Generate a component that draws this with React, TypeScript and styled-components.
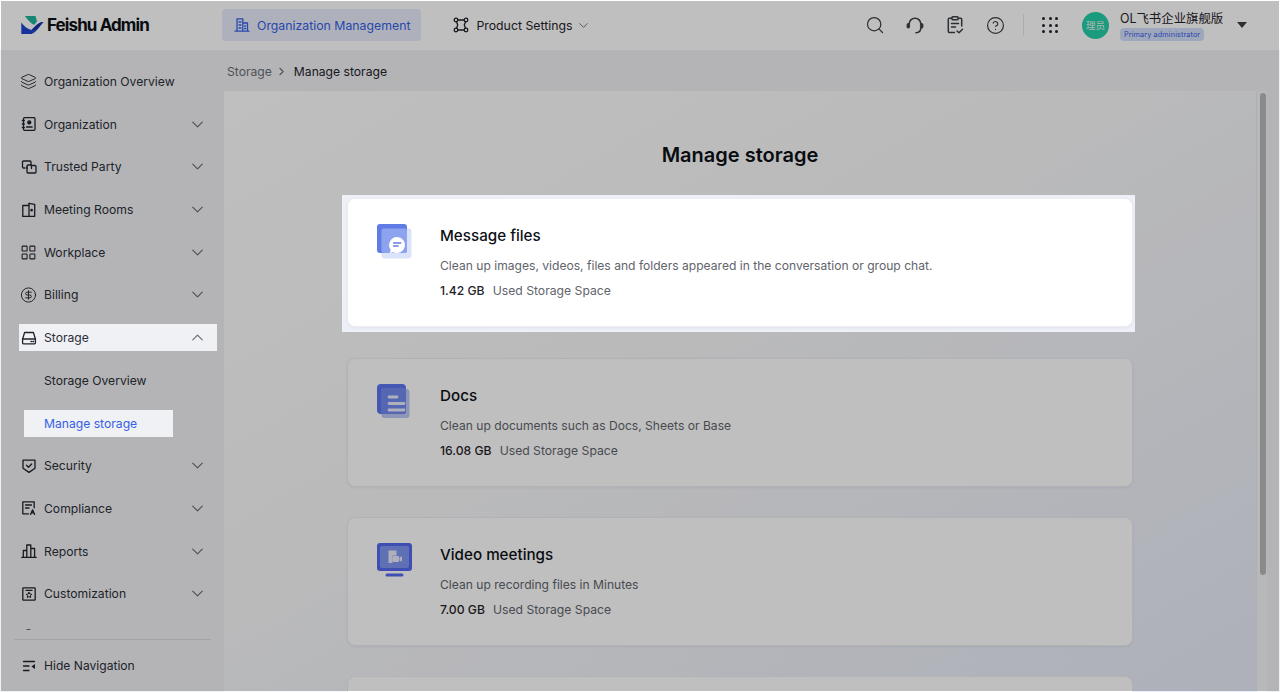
import { ReactNode } from "react";
import styled, { createGlobalStyle } from "styled-components";
import {
  ChevronDown,
  ChevronRight,
  ChevronUp,
  CircleDollarSign,
  CircleHelp,
  Layers,
  LayoutGrid,
  Search,
} from "lucide-react";

const GlobalStyle = createGlobalStyle`
  html, body {
    margin: 0;
    padding: 0;
    height: 100%;
    overflow: hidden;
  }
  body {
    font-family: Inter, "Noto Sans CJK SC", "Liberation Sans", sans-serif;
    color: #1f2329;
    background: #f0f1f5;
  }
`;

// dim layer of the product tour, the spotlit parts sit above it
const Dim = styled.div`
  position: fixed;
  inset: 1px;
  background: rgba(0, 0, 0, 0.25);
  z-index: 10;
`;

const Page = styled.div`
  width: 1280px;
  height: 692px;
  display: flex;
  flex-direction: column;
  overflow: hidden;
`;

const TopBar = styled.header`
  height: 50px;
  flex: none;
  display: flex;
  align-items: center;
  background: #ffffff;
  padding: 0 33px 0 21px;
`;

const Logo = styled.div`
  width: 201px;
  display: flex;
  align-items: center;
  gap: 3px;
  font-size: 17px;
  font-weight: 700;
  letter-spacing: -0.9px;
  color: #0d1117;
`;

const TopTab = styled.div<{ $active?: boolean }>`
  height: 32px;
  display: flex;
  align-items: center;
  gap: 7px;
  padding: 0 11px 0 12px;
  border-radius: 4px;
  font-size: 12.3px;
  color: ${(p) => (p.$active ? "#3660e6" : "#1f2329")};
  background: ${(p) => (p.$active ? "#e8edfb" : "transparent")};
  margin-right: ${(p) => (p.$active ? "20px" : "0")};
`;

const TabChevron = styled(ChevronDown)`
  margin-left: -3px;
  color: #6a6e75;
`;

const TopRight = styled.div`
  margin-left: auto;
  display: flex;
  align-items: center;
`;

const ToolIcon = styled.div`
  width: 20px;
  height: 20px;
  margin-right: 20px;
  display: flex;
  align-items: center;
  justify-content: center;
  color: #3b3f45;
`;

const Divider = styled.div`
  width: 1px;
  height: 22px;
  background: #e4e6ea;
  margin: 0 18px 0 -2px;
`;

const Dots = styled.div`
  display: grid;
  grid-template-columns: repeat(3, 3px);
  gap: 3.5px 3.5px;
  margin-right: 24px;
  & > i {
    width: 3px;
    height: 3px;
    border-radius: 50%;
    background: #1f2329;
  }
`;

const Avatar = styled.div`
  width: 27px;
  height: 27px;
  border-radius: 50%;
  background: #24cfa8;
  color: #e8f5f0;
  font-size: 9.5px;
  display: flex;
  align-items: center;
  justify-content: center;
  margin-right: 11px;
`;

const Tenant = styled.div`
  display: flex;
  flex-direction: column;
  align-items: flex-start;
  gap: 1px;
  width: 117px;
`;

const TenantName = styled.div`
  font-size: 12.4px;
  line-height: 17px;
  color: #1f2329;
`;

const RoleTag = styled.div`
  font-size: 7.3px;
  line-height: 13px;
  padding: 0 4px;
  border-radius: 4px;
  color: #3660e6;
  background: #d5dffb;
  letter-spacing: 0.1px;
`;

const Caret = styled.div`
  width: 0;
  height: 0;
  border-left: 5px solid transparent;
  border-right: 5px solid transparent;
  border-top: 6px solid #3b3f45;
`;

const Body = styled.div`
  flex: 1;
  min-height: 0;
  display: flex;
`;

const Side = styled.aside`
  width: 224px;
  flex: none;
  display: flex;
  flex-direction: column;
  padding: 18px 0 0 14px;
  box-sizing: border-box;
`;

const NavList = styled.nav`
  flex: 1;
  min-height: 0;
  margin-bottom: 9px;
  overflow: hidden;
  display: flex;
  flex-direction: column;
  gap: 15.7px;
`;

const NavRow = styled.div<{ $spot?: boolean }>`
  height: 27px;
  flex: none;
  width: 198px;
  margin-left: 5px;
  display: flex;
  align-items: center;
  padding: 0 10px 0 1px;
  box-sizing: border-box;
  font-size: 12.15px;
  color: #2b2f36;
  background: ${(p) => (p.$spot ? "#f0f1f5" : "transparent")};
  position: ${(p) => (p.$spot ? "relative" : "static")};
  z-index: ${(p) => (p.$spot ? 11 : "auto")};
`;

const NavIcon = styled.span`
  width: 17px;
  height: 17px;
  margin-right: 7px;
  flex: none;
  display: flex;
  align-items: center;
  justify-content: center;
  color: #1f2329;
`;

const NavLabel = styled.span`
  flex: 1;
`;

const SubRow = styled.div<{ $spot?: boolean }>`
  height: 27px;
  flex: none;
  width: 149px;
  margin-left: 10px;
  padding-left: 20px;
  box-sizing: border-box;
  display: flex;
  align-items: center;
  font-size: 12.15px;
  color: ${(p) => (p.$spot ? "#3660e6" : "#2b2f36")};
  background: ${(p) => (p.$spot ? "#f0f1f5" : "transparent")};
  position: ${(p) => (p.$spot ? "relative" : "static")};
  z-index: ${(p) => (p.$spot ? 11 : "auto")};
`;

const SideFoot = styled.div`
  flex: none;
  height: 53px;
  width: 197px;
  border-top: 1px solid #d9dbe0;
  display: flex;
  align-items: center;
  padding: 0 0 1px 6px;
  box-sizing: border-box;
  font-size: 12.1px;
  color: #2b2f36;
`;

const Main = styled.main`
  flex: 1;
  min-width: 0;
  display: flex;
  flex-direction: column;
`;

const Crumbs = styled.div`
  height: 41px;
  flex: none;
  display: flex;
  align-items: center;
  padding: 1px 0 0 3px;
  box-sizing: border-box;
  font-size: 12.15px;
  color: #6a6e75;
  gap: 3px;
  & b {
    font-weight: 400;
    color: #1f2329;
    margin-left: 3px;
  }
`;

const Panel = styled.div`
  flex: 1;
  min-height: 0;
  overflow: hidden;
  display: flex;
  flex-direction: column;
  align-items: center;
  width: 1032px;
  background: linear-gradient(150deg, #ffffff 0%, #f9f9fa 40%, #e8ecf8 100%);
  padding-top: 50px;
  box-sizing: border-box;
`;

const PageTitle = styled.h1`
  margin: 0 0 26px;
  font-size: 20px;
  line-height: 28px;
  font-weight: 600;
  color: #0d1117;
  text-align: center;
`;

const SpotWrap = styled.div`
  position: relative;
  z-index: 11;
  padding: 3px 2px 5px 5px;
  width: 793px;
  box-sizing: border-box;
  flex: none;
  margin: 0 0 -4px -3px;
  background: #edf0f6;
`;

const CardSlot = styled.div`
  width: 786px;
  flex: none;
  margin-top: 30px;
`;

const CardBox = styled.div`
  height: 129px;
  border: 1px solid #eceef2;
  border-radius: 8px;
  background: #ffffff;
  display: flex;
  box-sizing: border-box;
  padding: 25px 0 0 29px;
  box-shadow: 0 1px 3px rgba(30, 40, 70, 0.06);
`;

const CardIcon = styled.div`
  width: 37px;
  height: 37px;
  flex: none;
  margin-right: 26px;
`;

const CardText = styled.div`
  display: flex;
  flex-direction: column;
  padding-top: 1px;
`;

const CardTitle = styled.div`
  font-size: 15.2px;
  line-height: 22px;
  font-weight: 500;
  color: #0d1117;
  margin-bottom: 10px;
`;

const CardDesc = styled.div`
  font-size: 12.1px;
  line-height: 18px;
  color: #5f646b;
  margin-bottom: 7px;
`;

const CardUsage = styled.div`
  font-size: 12.2px;
  line-height: 18px;
  color: #5f646b;
  & b {
    font-weight: 500;
    color: #1f2329;
    margin-right: 8px;
  }
`;

const PartCard = styled.div`
  width: 786px;
  height: 40px;
  flex: none;
  margin-top: 30px;
  background: #fff;
  border: 1px solid #eceef2;
  border-radius: 8px;
  box-sizing: border-box;
`;

const ScrollTrack = styled.div`
  width: 11px;
  flex: none;
  margin: 41px 13px 0 0;
  background: #f5f6f8;
  border-left: 1px solid #ebebec;
  box-sizing: border-box;
`;

const ScrollThumb = styled.div`
  width: 6px;
  height: 482px;
  margin: 2px 0 0 3px;
  border-radius: 3px;
  background: #b8b9b9;
`;

const base = { fill: "none", stroke: "currentColor", strokeWidth: 1.3, strokeLinecap: "round", strokeLinejoin: "round" } as const;

const IconContact = () => (
  <svg width="16" height="16" viewBox="0 0 16 16" {...base}>
    <rect x="2.5" y="1.7" width="11.5" height="12.6" rx="1" />
    <path d="M1.3 4.5h2M1.3 8h2M1.3 11.5h2" />
    <circle cx="8.3" cy="6.4" r="1.5" fill="currentColor" />
    <path d="M5.6 11h5.4" strokeWidth="1.6" />
  </svg>
);
const IconTrusted = () => (
  <svg width="16" height="16" viewBox="0 0 16 16" {...base}>
    <path d="M10 6V3a1 1 0 0 0-1-1H2.500a1 1 0 0 0-1 1v5a1 1 0 0 0 1 1H4" />
    <path d="M6 8v5a1 1 0 0 0 1 1h7a1 1 0 0 0 1-1V7.500a1 1 0 0 0-1-1h-2.500" />
    <path d="M6 9.500V7a1 1 0 0 1 1-1h3.500v3.500" />
  </svg>
);
const IconRoom = () => (
  <svg width="16" height="16" viewBox="0 0 16 16" {...base}>
    <path d="M1.800 14.300V3.500h6" />
    <path d="M8 1.300l5.700 1v12H1.800" />
    <path d="M8 1.300v13" />
    <circle cx="10.600" cy="8.200" r=".7" fill="currentColor" />
  </svg>
);
const IconDrive = () => (
  <svg width="16" height="16" viewBox="0 0 16 16" {...base}>
    <path d="M3.600 2.500h8.800l2 6.500v4a.8.800 0 0 1-.8.800H2.400a.8.800 0 0 1-.8-.8V9z" />
    <path d="M1.600 9h12.800" />
    <path d="M10 11.500h.5M12 11.500h.5" strokeWidth="1.500" />
  </svg>
);
const IconShield = () => (
  <svg width="16" height="16" viewBox="0 0 16 16" {...base}>
    <path d="M2 2.200h12v8L8 14.400l-6-4.200z" />
    <path d="M5.500 7.300L7.500 9.300l3.200-3.300" />
  </svg>
);
const IconCompliance = () => (
  <svg width="16" height="16" viewBox="0 0 16 16" {...base}>
    <path d="M7.500 13.800H1.800V1.800h11.400v6" />
    <path d="M4.500 5h6M4.500 8h3.500" />
    <path d="M9.600 14.400l2-4.600 2 4.600M10.400 12.800h2.500" />
  </svg>
);
const IconBars = () => (
  <svg width="16" height="16" viewBox="0 0 16 16" {...base}>
    <path d="M.8 14.400h14.400" />
    <path d="M2.300 14.400V7.500h3.500v6.900M5.800 14.400V2h4v12.400M9.800 14.400V5.500h3.800v8.900" />
  </svg>
);
const IconCustom = () => (
  <svg width="16" height="16" viewBox="0 0 16 16" {...base}>
    <rect x="1.800" y="1.800" width="12.400" height="12.400" rx=".8" />
    <path d="M5 4.400h6" />
    <path d="M8 6.300l.9 1.700 1.900.3-1.400 1.300.3 1.900-1.700-.9-1.700.9.300-1.900-1.400-1.300 1.900-.3z" strokeWidth="1" />
  </svg>
);
const IconHide = () => (
  <svg width="16" height="16" viewBox="0 0 16 16" {...base}>
    <path d="M2.500 3.500h11M2.500 8h5.500M2.500 12.500h5.500" />
    <path d="M14 6v5l-3.600-2.500z" fill="currentColor" stroke="none" />
  </svg>
);
const IconBuilding = () => (
  <svg width="16" height="16" viewBox="0 0 16 16" {...base}>
    <path d="M3 14V1.800h5.800V14M8.800 6H13.500v8M1 14.200h14" />
    <path d="M5 5h2M5 8h2M5 11h2M10.700 9h1M10.700 11.500h1" />
  </svg>
);
const IconNodes = () => (
  <svg width="16" height="16" viewBox="0 0 16 16" {...base}>
    <circle cx="3" cy="3" r="1.800" />
    <circle cx="13" cy="3" r="1.800" />
    <circle cx="3" cy="13" r="1.800" />
    <circle cx="13" cy="13" r="1.800" />
    <path d="M4.800 3h6.400M4.800 13h6.400M3.500 4.800l1.200 3.200-1.200 3.200M12.500 4.800l-1.200 3.200 1.200 3.200" />
  </svg>
);
const IconHeadset = () => (
  <svg width="20" height="20" viewBox="0 0 20 20" {...base} strokeWidth={1.6}>
    <path d="M4.200 9a5.800 5.800 0 0 1 11.600 0" />
    <path d="M15.800 13c0 2.800-1.800 4.600-4.800 4.800" />
    <rect x="2" y="8.500" width="2.600" height="4.600" rx="1.200" fill="currentColor" strokeWidth="0.8" />
    <rect x="15.400" y="8.500" width="2.600" height="4.600" rx="1.200" fill="currentColor" strokeWidth="0.8" />
  </svg>
);
const IconTasks = () => (
  <svg width="20" height="20" viewBox="0 0 20 20" {...base} strokeWidth={1.5}>
    <path d="M9.500 17.500H4.300a1 1 0 0 1-1-1V4.300a1 1 0 0 1 1-1h11.400a1 1 0 0 1 1 1V11" />
    <rect x="7" y="1.800" width="6" height="3" rx=".8" fill="#fff" />
    <path d="M6.500 8.500h7M6.500 12h4" />
    <path d="M12 16l2 1.800 3.500-3.500" />
  </svg>
);
const IconFeishu = () => (
  <svg width="23" height="19" viewBox="0 0 23 19">
    <path d="M.3 6.500c3 4 6.500 6.500 10.200 7.500l5-5C18 7 20 6 22.500 6c-3 3-6.500 10-12 12H.3z" fill="#1f45d0" />
    <path d="M15.500 9C18 7 20 6 22.500 6l-7 7.500-5 .5z" fill="#172f9e" />
    <path d="M4 0h10.500l1.500 5.500-3 3.500C9.500 7 6 3.500 4 0z" fill="#1fb49b" />
  </svg>
);

const IconMessage = () => (
  <svg width="37" height="37" viewBox="0 0 37 37">
    <rect x="4.500" y="4.500" width="30" height="30" rx="3" fill="#dbe3fb" />
    <rect x="0" y="0" width="30" height="29" rx="3" fill="#5f7ce4" />
    <rect x="4.500" y="4.500" width="25.500" height="24.500" rx="2" fill="#8ea3f0" />
    <path d="M20 13a8 8 0 1 1-3.500 15.200L12.800 29l.9-3.300A8 8 0 0 1 20 13z" fill="#fff" />
    <path d="M16.700 19h7M16.700 22h4.300" stroke="#5f7ce4" strokeWidth="1.600" strokeLinecap="round" />
  </svg>
);
const IconDocs = () => (
  <svg width="37" height="37" viewBox="0 0 37 37">
    <rect x="4.500" y="5" width="28" height="29" rx="3" fill="#bcc8f3" />
    <rect x="0" y="0" width="29" height="30" rx="4" fill="#5b74f0" />
    <rect x="4" y="4" width="25" height="26" rx="2" fill="#7288ee" />
    <path d="M12 13h8M12 19.500h15M12 26h15" stroke="#e8ecfc" strokeWidth="2.800" strokeLinecap="round" />
  </svg>
);
const IconVideo = () => (
  <svg width="37" height="37" viewBox="0 0 37 37">
    <rect x="0" y="0" width="35" height="28" rx="3" fill="#5469ee" />
    <rect x="3" y="3" width="29" height="22" rx="2" fill="#8096f0" />
    <rect x="8.500" y="30.500" width="18" height="3" rx="1.500" fill="#5469ee" />
    <path d="M11.500 7.500h8v5h-4V20h-4z" fill="#e9edfb" />
    <rect x="15.500" y="13" width="6.500" height="6" rx="1.200" fill="#e9edfb" />
    <path d="M22.500 14.500l2.500-1.200v5.400l-2.500-1.200z" fill="#e9edfb" />
  </svg>
);

type StorageCard = {
  icon: ReactNode;
  title: string;
  desc: string;
  size: string;
};

const cards: StorageCard[] = [
  { icon: <IconDocs />, title: "Docs", desc: "Clean up documents such as Docs, Sheets or Base", size: "16.08 GB" },
  { icon: <IconVideo />, title: "Video meetings", desc: "Clean up recording files in Minutes", size: "7.00 GB" },
];

function CardBody({ card }: { card: StorageCard }) {
  return (
    <CardBox>
      <CardIcon>{card.icon}</CardIcon>
      <CardText>
        <CardTitle>{card.title}</CardTitle>
        <CardDesc>{card.desc}</CardDesc>
        <CardUsage>
          <b>{card.size}</b>Used Storage Space
        </CardUsage>
      </CardText>
    </CardBox>
  );
}

const messageCard: StorageCard = {
  icon: <IconMessage />,
  title: "Message files",
  desc: "Clean up images, videos, files and folders appeared in the conversation or group chat.",
  size: "1.42 GB",
};

function NavItem({ icon, label, open, spot, leaf }: { icon: ReactNode; label: string; open?: boolean; spot?: boolean; leaf?: boolean }) {
  return (
    <NavRow $spot={spot}>
      <NavIcon>{icon}</NavIcon>
      <NavLabel>{label}</NavLabel>
      {!leaf && (open ? <ChevronUp size={19} strokeWidth={1.5} color="#6a6e75" /> : <ChevronDown size={19} strokeWidth={1.5} color="#6a6e75" />)}
    </NavRow>
  );
}

export default function App() {
  return (
    <Page>
      <GlobalStyle />
      <Dim />
      <TopBar>
        <Logo>
          <IconFeishu />
          Feishu Admin
        </Logo>
        <TopTab $active>
          <IconBuilding />
          Organization Management
        </TopTab>
        <TopTab>
          <IconNodes />
          Product Settings
          <TabChevron size={15} strokeWidth={1.5} />
        </TopTab>
        <TopRight>
          <ToolIcon>
            <Search size={20} strokeWidth={1.5} />
          </ToolIcon>
          <ToolIcon>
            <IconHeadset />
          </ToolIcon>
          <ToolIcon>
            <IconTasks />
          </ToolIcon>
          <ToolIcon>
            <CircleHelp size={19} strokeWidth={1.5} />
          </ToolIcon>
          <Divider />
          <Dots>
            {Array.from({ length: 9 }).map((_, i) => (
              <i key={i} />
            ))}
          </Dots>
          <Avatar>理员</Avatar>
          <Tenant>
            <TenantName>OL飞书企业旗舰版</TenantName>
            <RoleTag>Primary administrator</RoleTag>
          </Tenant>
          <Caret />
        </TopRight>
      </TopBar>
      <Body>
        <Side>
          <NavList>
            <NavItem icon={<Layers size={17} strokeWidth={1.3} />} label="Organization Overview" leaf />
            <NavItem icon={<IconContact />} label="Organization" />
            <NavItem icon={<IconTrusted />} label="Trusted Party" />
            <NavItem icon={<IconRoom />} label="Meeting Rooms" />
            <NavItem icon={<LayoutGrid size={17} strokeWidth={1.5} />} label="Workplace" />
            <NavItem icon={<CircleDollarSign size={18} strokeWidth={1.3} />} label="Billing" />
            <NavItem icon={<IconDrive />} label="Storage" open spot />
            <SubRow>Storage Overview</SubRow>
            <SubRow $spot>Manage storage</SubRow>
            <NavItem icon={<IconShield />} label="Security" />
            <NavItem icon={<IconCompliance />} label="Compliance" />
            <NavItem icon={<IconBars />} label="Reports" />
            <NavItem icon={<IconCustom />} label="Customization" />
            <NavItem icon={<Layers size={17} strokeWidth={1.3} />} label="" leaf />
          </NavList>
          <SideFoot>
            <NavIcon>
              <IconHide />
            </NavIcon>
            Hide Navigation
          </SideFoot>
        </Side>
        <Main>
          <Crumbs>
            Storage
            <ChevronRight size={13} />
            <b>Manage storage</b>
          </Crumbs>
          <Panel>
            <PageTitle>Manage storage</PageTitle>
            <SpotWrap>
              <CardBody card={messageCard} />
            </SpotWrap>
            {cards.map((card) => (
              <CardSlot key={card.title}>
                <CardBody card={card} />
              </CardSlot>
            ))}
            <PartCard />
          </Panel>
        </Main>
        <ScrollTrack>
          <ScrollThumb />
        </ScrollTrack>
      </Body>
    </Page>
  );
}
